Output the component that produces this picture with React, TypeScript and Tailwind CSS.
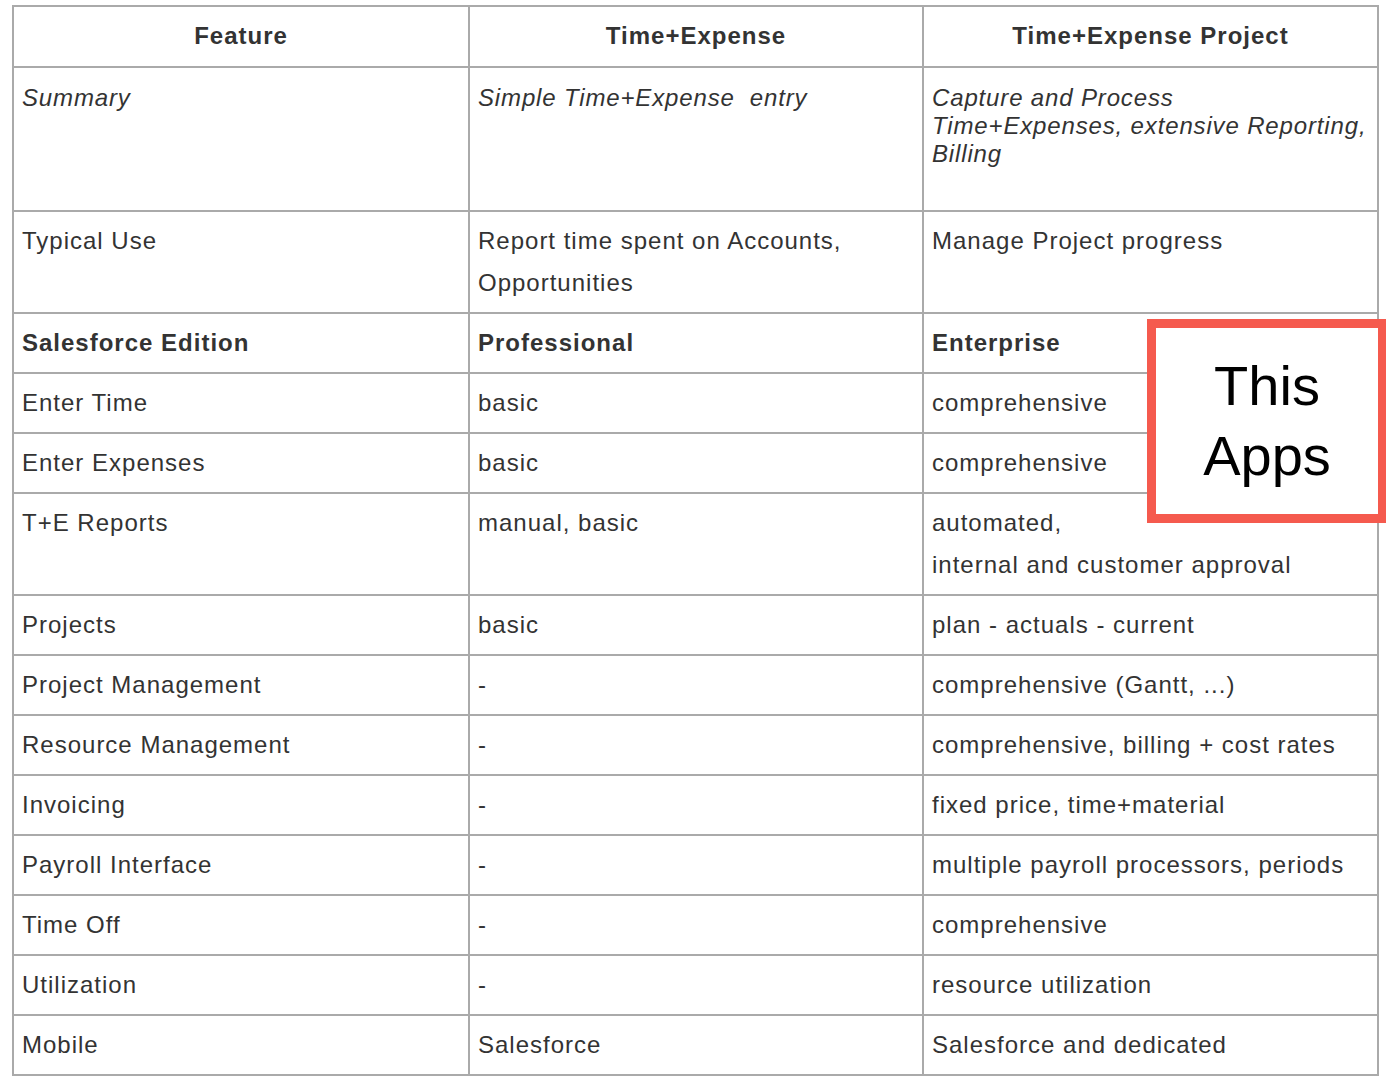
import React from "react";

type Row = {
  h: string;
  cells: React.ReactNode[];
};

const rows: Row[] = [
  { h: "h-[60px]", cells: ["Enter Time", "basic", "comprehensive"] },
  { h: "h-[60px]", cells: ["Enter Expenses", "basic", "comprehensive"] },
  {
    h: "h-[102px]",
    cells: [
      "T+E Reports",
      "manual, basic",
      <>
        automated,
        <br />
        internal and customer approval
      </>,
    ],
  },
  { h: "h-[60px]", cells: ["Projects", "basic", "plan - actuals - current"] },
  { h: "h-[60px]", cells: ["Project Management", "-", "comprehensive (Gantt, ...)"] },
  { h: "h-[60px]", cells: ["Resource Management", "-", "comprehensive, billing + cost rates"] },
  { h: "h-[60px]", cells: ["Invoicing", "-", "fixed price, time+material"] },
  { h: "h-[60px]", cells: ["Payroll Interface", "-", "multiple payroll processors, periods"] },
  { h: "h-[60px]", cells: ["Time Off", "-", "comprehensive"] },
  { h: "h-[60px]", cells: ["Utilization", "-", "resource utilization"] },
  { h: "h-[60px]", cells: ["Mobile", "Salesforce", "Salesforce and dedicated"] },
];

const td = "border-r-2 border-b-2 border-[#aaaaaa] px-[8px] pt-[8px] align-top leading-[42px]";
const tdSum =
  "border-r-2 border-b-2 border-[#aaaaaa] px-[8px] pt-[16px] align-top italic leading-[28px] whitespace-nowrap tracking-[0.85px]";

export default function App() {
  return (
    <div className="relative min-h-[1080px] w-[1386px] overflow-hidden bg-white pl-[12px] pt-[5px] font-['Liberation_Sans',Arial,sans-serif] text-[24px] text-[#333333]">
      <table className="w-[1367px] table-fixed border-separate border-spacing-0 border-l-2 border-t-2 border-[#aaaaaa] tracking-[1px]">
        <colgroup>
          <col className="w-[456px]" />
          <col className="w-[454px]" />
          <col className="w-[455px]" />
        </colgroup>
        <thead>
          <tr className="h-[61px]">
            <th className={`${td} text-center font-bold`}>Feature</th>
            <th className={`${td} text-center font-bold`}>Time+Expense</th>
            <th className={`${td} text-center font-bold`}>Time+Expense Project</th>
          </tr>
        </thead>
        <tbody>
          <tr className="h-[144px]">
            <td className={tdSum}>Summary</td>
            <td className={tdSum}>Simple Time+Expense{"\u00a0 "}entry</td>
            <td className={tdSum}>
              Capture and Process
              <br />
              Time+Expenses, extensive Reporting,
              <br />
              Billing
            </td>
          </tr>
          <tr className="h-[102px]">
            <td className={td}>Typical Use</td>
            <td className={td}>
              Report time spent on Accounts,
              <br />
              Opportunities
            </td>
            <td className={td}>Manage Project progress</td>
          </tr>
          <tr className="h-[60px]">
            <td className={`${td} font-bold`}>Salesforce Edition</td>
            <td className={`${td} font-bold`}>Professional</td>
            <td className={`${td} font-bold`}>Enterprise</td>
          </tr>
          {rows.map((r, i) => (
            <tr key={i} className={r.h}>
              {r.cells.map((c, j) => (
                <td key={j} className={`${td} whitespace-nowrap`}>
                  {c}
                </td>
              ))}
            </tr>
          ))}
        </tbody>
      </table>

      <div className="absolute left-[1147px] top-[319px] flex h-[204px] w-[240px] items-center justify-center border-[9px] border-[#f55a4e] bg-white">
        <div className="text-center text-[56px] leading-[70px] text-black">
          This
          <br />
          Apps
        </div>
      </div>
    </div>
  );
}
